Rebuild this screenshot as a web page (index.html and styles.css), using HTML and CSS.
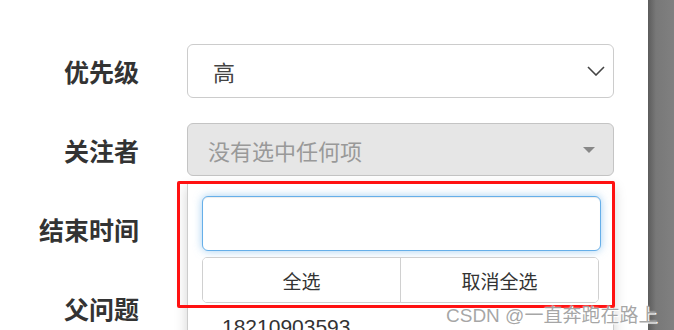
FILE: index.html
```html
<!DOCTYPE html>
<html lang="zh-CN">
<head>
    <meta charset="UTF-8">
    <meta name="viewport" content="width=device-width, initial-scale=1.0">
    <title>编辑问题</title>
    <link rel="stylesheet" href="styles.css">
</head>
<body>

<div class="page">
    <div class="main">
        <form class="issue-form">
            <label class="form-label">优先级</label>
            <div class="field">
                <div class="select">
                    <span class="select-value">高</span>
                    <svg class="chevron" width="18" height="10" viewBox="0 0 18 10">
                        <path d="M1 1 L9 9 L17 1" fill="none" stroke="#444" stroke-width="1.6"/>
                    </svg>
                </div>
            </div>

            <label class="form-label">关注者</label>
            <div class="field">
                <div class="select select-disabled">
                    <span class="select-placeholder">没有选中任何项</span>
                    <span class="caret"></span>
                </div>

                <!-- 下拉菜单 -->
                <div class="dropdown-menu">
                    <div class="search-box"><input type="text" class="search-input"></div>
                    <div class="actions">
                        <button type="button" class="action-btn">全选</button>
                        <button type="button" class="action-btn">取消全选</button>
                    </div>
                    <ul class="options">
                        <li>18210903593</li>
                    </ul>
                </div>
                <div class="highlight"></div>
            </div>

            <label class="form-label">结束时间</label>
            <div class="field"></div>

            <label class="form-label">父问题</label>
            <div class="field"></div>
        </form>
    </div>
    <div class="scrollbar"></div>
</div>

<div class="watermark">CSDN @一直奔跑在路上</div>

</body>
</html>
```

FILE: styles.css
```css
html, body {
    height: 100%;
    overflow: hidden;
}
body {
    margin: 0;
    background: #fff;
    font-family: "Noto Sans CJK SC", "Liberation Sans", sans-serif;
    color: #333;
}
.page {
    display: flex;
    height: 100%;
}
.main {
    flex: 1;
    position: relative;
}
.scrollbar {
    width: 26px;
    background: linear-gradient(to right, #5c5c5c, #787878 8px, #808080);
}
.issue-form {
    display: grid;
    grid-template-columns: 139px 427px;
    grid-auto-rows: 54px;
    column-gap: 48px;
    row-gap: 25px;
    padding-top: 44px;
}
.form-label {
    display: flex;
    align-items: center;
    justify-content: flex-end;
    font-size: 25px;
    font-weight: bold;
    color: #333;
}
.field {
    position: relative;
}
.select {
    box-sizing: border-box;
    height: 100%;
    display: flex;
    align-items: center;
    justify-content: space-between;
    padding: 0 8px 0 25px;
    border: 1px solid #ccc;
    border-radius: 6px;
    background: #fff;
}
.select-value {
    font-size: 22px;
    color: #444;
}
.select-disabled {
    height: 53px;
    padding: 0 18px 0 20px;
    background: #e6e6e6;
    border-color: #c4c4c4;
}
.select-placeholder {
    font-size: 22px;
    color: #999;
}
.caret {
    width: 0;
    height: 0;
    border-left: 6px solid transparent;
    border-right: 6px solid transparent;
    border-top: 6px solid #888;
}
.dropdown-menu {
    position: absolute;
    top: 58px;
    left: 0;
    right: 0;
    height: 200px;
    box-sizing: border-box;
    padding: 14px 14px 0 14px;
    background: #fff;
    border: 1px solid #ccc;
    box-shadow: 0 6px 12px rgba(0, 0, 0, 0.18);
}
.search-input {
    display: block;
    box-sizing: border-box;
    width: 399px;
    height: 55px;
    border: 1px solid #66afe9;
    border-radius: 6px;
    outline: none;
    box-shadow: inset 0 1px 1px rgba(0, 0, 0, 0.075), 0 0 8px rgba(102, 175, 233, 0.6);
}
.actions {
    display: flex;
    width: 397px;
    height: 46px;
    margin-top: 6px;
    border: 1px solid #d0d0d0;
    border-radius: 5px;
    box-sizing: border-box;
    overflow: hidden;
}
.action-btn {
    flex: 1;
    border: none;
    background: #fff;
    font-family: "Noto Sans CJK SC", sans-serif;
    font-size: 19px;
    color: #333;
    padding: 0;
}
.action-btn + .action-btn {
    border-left: 1px solid #d0d0d0;
}
.options {
    list-style: none;
    margin: 0;
    padding: 12px 0 0 20px;
    font-family: "Liberation Sans", sans-serif;
    font-size: 21px;
    color: #333;
}
.highlight {
    position: absolute;
    top: 58px;
    left: -10px;
    width: 438px;
    height: 127px;
    box-sizing: border-box;
    border: 3px solid #ff1111;
    border-radius: 2px;
}
.watermark {
    position: absolute;
    left: 446px;
    top: 300px;
    font-family: "Liberation Sans", "Noto Sans CJK SC", sans-serif;
    font-size: 19px;
    color: rgba(150, 150, 150, 0.85);
    text-shadow: 0 0 2px #fff, 1px 1px 0 #fff;
    white-space: nowrap;
}
```
